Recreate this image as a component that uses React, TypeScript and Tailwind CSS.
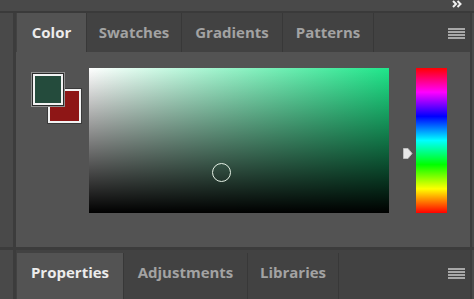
import React from "react";

const font = { fontFamily: '"Open Sans", "Liberation Sans", sans-serif' };

function Hamburger() {
  return (
    <div className="flex flex-col gap-[1px] w-[17px]">
      <div className="h-[2px] bg-[#a8a8a8]" />
      <div className="h-[2px] bg-[#a8a8a8]" />
      <div className="h-[2px] bg-[#a8a8a8]" />
      <div className="h-[2px] bg-[#a8a8a8]" />
    </div>
  );
}

function Tab({ label, active, w }: { label: string; active?: boolean; w: string }) {
  return (
    <div
      className={
        "h-full flex justify-center pt-[9px] border-r border-[#383838] text-[15px] font-bold leading-[20px] " +
        w +
        (active ? " bg-[#535353] text-[#ececec]" : " text-[#a3a3a3]")
      }
    >
      {label}
    </div>
  );
}

export default function App() {
  return (
    <div className="w-[474px] h-[299px] bg-[#494949] flex flex-col overflow-hidden" style={font}>
      {/* top strip */}
      <div className="h-[11px] flex justify-end pr-[12px] bg-[#494949]">
        <svg width="10" height="8" viewBox="0 0 10 8">
          <path d="M1 1 L4 4 L1 7" stroke="#f0f0f0" strokeWidth="2" fill="none" />
          <path d="M5.5 1 L8.5 4 L5.5 7" stroke="#f0f0f0" strokeWidth="2" fill="none" />
        </svg>
      </div>
      <div className="h-[2px] bg-[#3a3a3a]" />

      {/* middle group */}
      <div className="flex h-[234px]">
        <div className="w-[13px] bg-[#494949]" />
        <div className="w-[3px] bg-[#3c3c3c]" />
        <div className="flex-1 flex flex-col">
          <div className="h-[39px] bg-[#424242] flex pl-[1px]">
            <Tab label="Color" active w="w-[70px]" />
            <Tab label="Swatches" w="w-[95px]" />
            <Tab label="Gradients" w="w-[101px]" />
            <Tab label="Patterns" w="w-[91px]" />
            <div className="ml-auto mr-[5px] self-center mt-[2px]">
              <Hamburger />
            </div>
          </div>
          <div className="flex-1 bg-[#535353] flex items-start pt-[16px] pl-[15px]">
            {/* swatches */}
            <div className="relative w-[51px] h-[54px] mt-[4px]">
              <div className="absolute left-[17px] top-[17px] w-[33px] h-[34px] bg-[#f2f2f2] p-[2px] outline outline-1 outline-[#3a3a3a]">
                <div className="w-full h-full bg-[#8e1616]" />
              </div>
              <div className="absolute left-0 top-0 w-[34px] h-[35px] bg-[#8f8f8f] p-[1px]">
                <div className="w-full h-full bg-[#2b2b2b] p-[1px]">
                  <div className="w-full h-full bg-[#f2f2f2] p-[2px]">
                    <div className="w-full h-full bg-[#244b3c]" />
                  </div>
                </div>
              </div>
            </div>
            {/* field */}
            <div className="relative ml-[7px] w-[300px] h-[145px] bg-[linear-gradient(to_top,#000,rgba(0,0,0,0)),linear-gradient(to_right,#fff,#1fe68a)]">
              <div className="absolute left-[123px] top-[95px] w-[19px] h-[19px] rounded-full border-[1.5px] border-[#e4f0e4]" />
            </div>
            {/* arrow */}
            <div className="ml-[13px] mt-[79px] w-[11px]">
              <svg width="11" height="13" viewBox="0 0 11 13">
                <path d="M1.5 1.5 L6 1.5 L10 6.5 L6 11.5 L1.5 11.5 Z" fill="#e8e8e8" stroke="#bdbdbd" strokeWidth="1" strokeLinejoin="round" />
              </svg>
            </div>
            {/* hue */}
            <div className="ml-[3px] w-[31px] h-[145px] bg-[linear-gradient(to_bottom,#ff0000,#ff00ff,#0000ff,#00ffff,#00ff00,#ffff00,#ff0000)]" />
          </div>
        </div>
        <div className="w-[2px] bg-[#3c3c3c]" />
        <div className="w-[2px] bg-[#494949]" />
      </div>
      <div className="h-[3px] bg-[#3c3c3c]" />

      {/* bottom group */}
      <div className="flex flex-1">
        <div className="w-[13px] bg-[#494949]" />
        <div className="w-[3px] bg-[#3c3c3c]" />
        <div className="flex-1 bg-[#424242] pt-[3px] flex pl-[1px]">
          <Tab label="Properties" active w="w-[107px]" />
          <Tab label="Adjustments" w="w-[124px]" />
          <Tab label="Libraries" w="w-[91px]" />
          <div className="ml-auto mr-[5px] self-start mt-[15px]">
            <Hamburger />
          </div>
        </div>
        <div className="w-[2px] bg-[#3c3c3c]" />
        <div className="w-[2px] bg-[#494949]" />
      </div>
    </div>
  );
}
